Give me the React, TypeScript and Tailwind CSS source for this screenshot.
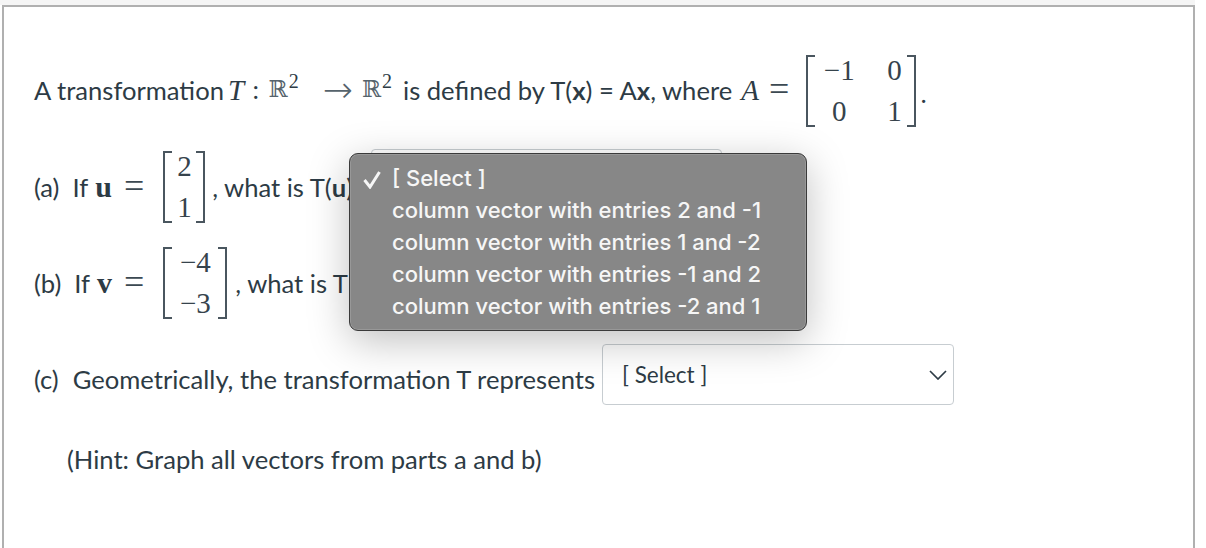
import React from "react";

const serif = "font-['Liberation_Serif','DejaVu_Serif',serif]";
const dejavu = "font-['DejaVu_Sans',sans-serif]";

function Matrix({ rows, widths, pad, gap = 0 }: { rows: string[][]; widths: number[]; pad: number; gap?: number }) {
  return (
    <div className={`flex h-[72px] items-stretch text-[29px] leading-[41px] text-[#36434c] ${serif}`}>
      <div className="w-[9px] border-y-2 border-l-2 border-[#4a565f]" />
      <div className="flex flex-col justify-center" style={{ paddingLeft: pad, paddingRight: pad }}>
        {rows.map((r, i) => (
          <div key={i} className="flex" style={{ gap }}>
            {r.map((c, j) => (
              <div key={j} className="text-center" style={{ width: widths[j] }}>
                {c}
              </div>
            ))}
          </div>
        ))}
      </div>
      <div className="w-[9px] border-y-2 border-r-2 border-[#4a565f]" />
    </div>
  );
}

function Eq() {
  return <span className={`text-[36px] leading-none ${serif} text-[#3c4952]`}>=</span>;
}

const options = [
  "column vector with entries 2 and -1",
  "column vector with entries 1 and -2",
  "column vector with entries -1 and 2",
  "column vector with entries -2 and 1",
];

export default function App() {
  return (
    <div className="relative h-[548px] w-[1206px] overflow-hidden bg-white font-['Lato',sans-serif] text-[25.6px] leading-[36px] text-[#2d3b45]">
      <div className="h-[5px] w-[1195px] bg-[#f5f5f5]" />
      <div className="ml-[2px] h-[543px] w-[1193px] border-x-2 border-t-2 border-[#b0b0b0] bg-white pl-[30px] pt-[48px]">
        <div className="flex h-[72px] items-center">
          <span className="-mt-[3px] whitespace-nowrap">A transformation</span>
          <span className={`-mt-[3px] ml-[4px] text-[29px] italic ${serif}`}>T</span>
          <span className={`-mt-[3px] ml-[8px] text-[27px] ${serif}`}>:</span>
          <span className="-mt-[5px] ml-[9px] font-['DejaVu_Serif',serif] text-[23px] text-[#56636c]">ℝ</span>
          <span className={`-mt-[20px] ml-[1px] text-[20px] ${serif}`}>2</span>
          <span className={`-mt-[3px] ml-[24px] text-[36px] leading-none ${dejavu} font-light text-[#56636c]`}>→</span>
          <span className="-mt-[5px] ml-[9px] font-['DejaVu_Serif',serif] text-[23px] text-[#56636c]">ℝ</span>
          <span className={`-mt-[20px] ml-[1px] text-[20px] ${serif}`}>2</span>
          <span className="-mt-[3px] ml-[11px] whitespace-nowrap">is defined by T(<b>x</b>) = A<b>x</b>, where</span>
          <span className={`-mt-[3px] ml-[9px] text-[29px] italic ${serif}`}>A</span>
          <div className="-mt-[3px] ml-[10px]"><Eq /></div>
          <div className="ml-[17px]">
            <Matrix rows={[["−1", "0"], ["0", "1"]]} widths={[36, 14]} pad={6} gap={30} />
          </div>
          <span className={`ml-[4px] mt-[6px] text-[27px] ${serif}`}>.</span>
        </div>

        <div className="mt-[24px] flex h-[72px] items-center">
          <span className="-mt-[1px]">(a)</span>
          <span className="-mt-[1px] ml-[13px]">If</span>
          <b className={`-mt-[1px] ml-[7px] text-[30px] ${serif}`}>u</b>
          <div className="-mt-[1px] ml-[12px]"><Eq /></div>
          <div className="ml-[19px]">
            <Matrix rows={[["2"], ["1"]]} widths={[14]} pad={5} />
          </div>
          <span className="-mt-[1px] ml-[7px] whitespace-nowrap">, what is T(<b>u</b>)</span>
          <div className="-mt-[2px] ml-[18px] h-[61px] w-[351px] self-start rounded-[4px] border border-[#c7cdd1] bg-white" />
        </div>

        <div className="mt-[24px] flex h-[72px] items-center">
          <span>(b)</span>
          <span className="ml-[13px]">If</span>
          <b className={`ml-[7px] text-[30px] ${serif}`}>v</b>
          <div className="ml-[12px]"><Eq /></div>
          <div className="ml-[19px]">
            <Matrix rows={[["−4"], ["−3"]]} widths={[36]} pad={5} />
          </div>
          <span className="ml-[8px] whitespace-nowrap">, what is T</span>
        </div>

        <div className="mt-[23px] flex h-[61px] items-center">
          <span className="mt-[12px] whitespace-nowrap">(c)</span>
          <span className="ml-[14px] mt-[12px] whitespace-nowrap">Geometrically, the transformation T represents</span>
          <div className="absolute left-[602px] top-[344px] flex h-[61px] w-[352px] items-start justify-between rounded-[4px] border border-[#c7cdd1] bg-white pl-[19px] pr-[6px] pt-[13px]">
            <span className="text-[22.5px] leading-[34px]">[ Select ]</span>
            <svg width="18" height="10" viewBox="0 0 18 10" className="mt-[12px]" fill="none" stroke="#2d3b45" strokeWidth="1.7">
              <path d="M1 1 L9 9 L17 1" />
            </svg>
          </div>
        </div>

        <div className="ml-[33px] mt-[38px] whitespace-nowrap">(Hint: Graph all vectors from parts a and b)</div>
      </div>

      <div className="absolute left-[349px] top-[153px] h-[178px] w-[458px] rounded-[9px] border border-[#3a3a3a] bg-[#878787] pl-[42px] pt-[8px] font-['Inter',sans-serif] text-[22px] font-medium leading-[32px] text-[#f6f6f6] shadow-[0_10px_40px_rgba(0,0,0,0.25),inset_0_0_0_1px_rgba(255,255,255,0.15)]">
        <svg className="absolute left-[13px] top-[16px]" width="18" height="19" viewBox="0 0 18 19" fill="none" stroke="#f6f6f6" strokeWidth="3">
          <path d="M1.5 10 L7 17 L16.5 2" />
        </svg>
        <div>[ Select ]</div>
        {options.map((o) => (
          <div key={o} className="whitespace-nowrap">{o}</div>
        ))}
      </div>
    </div>
  );
}
